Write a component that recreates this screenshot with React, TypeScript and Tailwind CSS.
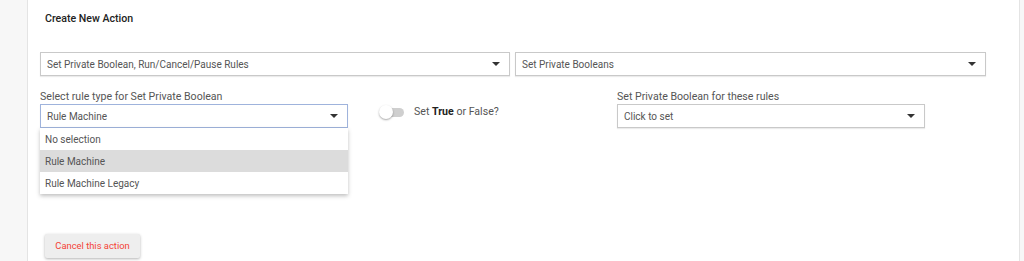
export default function App() {
  const Caret = () => (
    <span className="w-0 h-0 border-l-[4px] border-r-[4px] border-t-[4px] border-l-transparent border-r-transparent border-t-[#333]" />
  );

  const Select = ({ text, w, focused }: { text: string; w: string; focused?: boolean }) => (
    <div
      className={`${w} h-[24px] flex items-center justify-between pl-[6px] pr-[9px] bg-white border ${
        focused ? "border-[#9fb3dc]" : "border-[#c9c9c9]"
      } shadow-[0_1px_1px_rgba(0,0,0,0.08)]`}
    >
      <span className="text-[10px] text-[#555]">{text}</span>
      <Caret />
    </div>
  );

  return (
    <div className="w-[1024px] h-[261px] flex bg-[#f7f7f7] overflow-hidden font-['Roboto',sans-serif]">
      <div className="w-[28px] border-r border-[#e4e4e4]" />
      <div className="w-[992px] bg-white border-r border-[#e4e4e4] pl-[12px] pt-[12px]">
        <h3 className="pl-[5px] text-[10.6px] font-medium text-[#222] leading-[14px]">Create New Action</h3>

        <div className="mt-[26px] flex gap-[5px]">
          <Select text="Set Private Boolean, Run/Cancel/Pause Rules" w="w-[470px]" />
          <Select text="Set Private Booleans" w="w-[471px]" />
        </div>

        <div className="mt-[14px] flex">
          <div className="w-[308px] relative">
            <div className="text-[10.6px] text-[#555] leading-[14px]">Select rule type for Set Private Boolean</div>
            <Select text="Rule Machine" w="w-[308px]" focused />
            <div className="absolute left-0 top-[38px] w-[308px] bg-white shadow-[0_2px_4px_rgba(0,0,0,0.25)] text-[10px] text-[#555]">
              <div className="h-[22px] flex items-center pl-[5px]">No selection</div>
              <div className="h-[22px] flex items-center pl-[5px] bg-[#dcdcdc]">Rule Machine</div>
              <div className="h-[22px] flex items-center pl-[5px]">Rule Machine Legacy</div>
            </div>
          </div>

          <div className="w-[269px] pt-[14px] pl-[31px] flex items-start">
            <div className="relative w-[25px] h-[14px] mt-[1px] flex items-center">
              <div className="w-[23px] h-[9px] ml-[2px] rounded-full bg-[#cfcfcf]" />
              <div className="absolute left-0 top-0 w-[14px] h-[14px] rounded-full bg-white shadow-[0_1px_2px_rgba(0,0,0,0.35)]" />
            </div>
            <span className="ml-[10px] text-[10.6px] text-[#555] leading-[16px]">
              Set <b className="font-bold text-[#222]">True</b> or False?
            </span>
          </div>

          <div className="w-[308px]">
            <div className="text-[10.6px] text-[#555] leading-[14px]">Set Private Boolean for these rules</div>
            <Select text="Click to set" w="w-[308px]" />
          </div>
        </div>

        <div className="mt-[104px] pl-[5px]">
          <button className="w-[95px] h-[24px] bg-[#eeeeee] text-[9.4px] text-[#f44336] rounded-[2px] shadow-[0_1px_3px_rgba(0,0,0,0.3)]">
            Cancel this action
          </button>
        </div>
      </div>
    </div>
  );
}
